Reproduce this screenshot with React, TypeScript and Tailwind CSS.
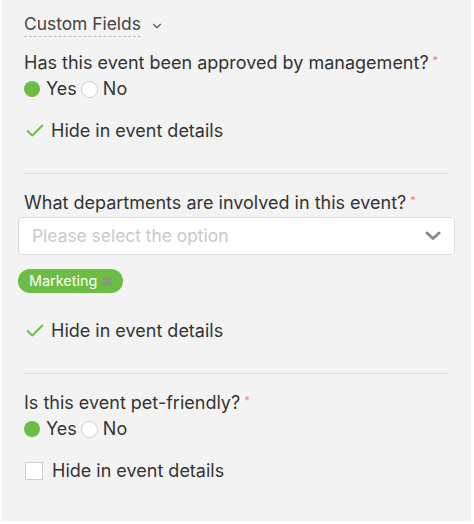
import { Check, ChevronDown } from "lucide-react";

const GREEN = "bg-[#6cbd45]";

export default function App() {
  return (
    <div className="h-[524px] w-[474px] bg-white pl-[2px] pr-[3px] pb-[3px]" style={{ fontFamily: "Inter, 'Open Sans', sans-serif" }}>
      <div className="h-full bg-[#f3f3f3] px-[22px] pt-[14px] text-[#333]">
        <div className="flex items-center gap-[9px]">
          <span className="border-b border-dashed border-[#bdbdbd] pb-[2px] text-[17.4px] leading-[20px] text-[#444]">Custom Fields</span>
          <ChevronDown className="h-[14px] w-[14px] text-[#555]" strokeWidth={2} />
        </div>

        <Question label="Has this event been approved by management?" className="mt-[15px]" />
        <YesNo />
        <Hide checked />

        <div className="mt-[31px] border-t border-[#dedede]" />

        <Question label="What departments are involved in this event?" className="mt-[18px]" />
        <div className="-mx-[6px] mt-[3px] flex h-[38px] items-center justify-between rounded-[4px] border border-[#dcdcdc] bg-white pl-[13px] pr-[13px]">
          <span className="text-[17.4px] text-[#c9c9c9]">Please select the option</span>
          <svg width="16" height="10" viewBox="0 0 16 10" className="text-[#8a8a8a]">
            <path d="M2 2l6 5.5L14 2" fill="none" stroke="currentColor" strokeWidth="3" strokeLinecap="round" strokeLinejoin="round" />
          </svg>
        </div>
        <div className="mt-[14px] -ml-[6px] flex">
          <span className={`${GREEN} flex h-[24px] items-center gap-[6px] rounded-full pl-[11px] pr-[11px] text-[14.4px] text-white`}>
            Marketing
            <svg width="9" height="9" viewBox="0 0 9 9">
              <path d="M1.5 1.5l6 6M7.5 1.5l-6 6" stroke="#8f8f8f" strokeWidth="2.6" strokeLinecap="round" />
            </svg>
          </span>
        </div>
        <Hide checked className="mt-[27px]" />

        <div className="mt-[31px] border-t border-[#dedede]" />

        <Question label="Is this event pet-friendly?" className="mt-[18px]" />
        <YesNo />
        <Hide className="mt-[20px]" />
      </div>
    </div>
  );
}

function Question({ label, className = "" }: { label: string; className?: string }) {
  return (
    <div className={`flex items-start text-[18px] leading-[22px] text-[#333] ${className}`}>
      <span>{label}</span>
      <span className="ml-[4px] -mt-[3px] text-[11px] text-[#f08080]">*</span>
    </div>
  );
}

function YesNo() {
  return (
    <div className="mt-[4px] flex items-center text-[18px] leading-[22px] text-[#333]">
      <span className={`mr-[6px] h-[16px] w-[16px] rounded-full ${GREEN}`} />
      <span>Yes</span>
      <span className="ml-[4px] mr-[5px] h-[17px] w-[17px] rounded-full border border-[#cfcfcf] bg-white" />
      <span>No</span>
    </div>
  );
}

function Hide({ checked, className = "mt-[20px]" }: { checked?: boolean; className?: string }) {
  return (
    <div className={`flex items-center text-[18px] leading-[22px] text-[#333] ${className}`}>
      {checked ? (
        <Check className="mr-[5px] h-[22px] w-[22px] text-[#6cbd45]" strokeWidth={2} />
      ) : (
        <span className="ml-[1px] mr-[9px] h-[18px] w-[18px] border border-[#cfcfcf] bg-white" />
      )}
      <span>Hide in event details</span>
    </div>
  );
}
